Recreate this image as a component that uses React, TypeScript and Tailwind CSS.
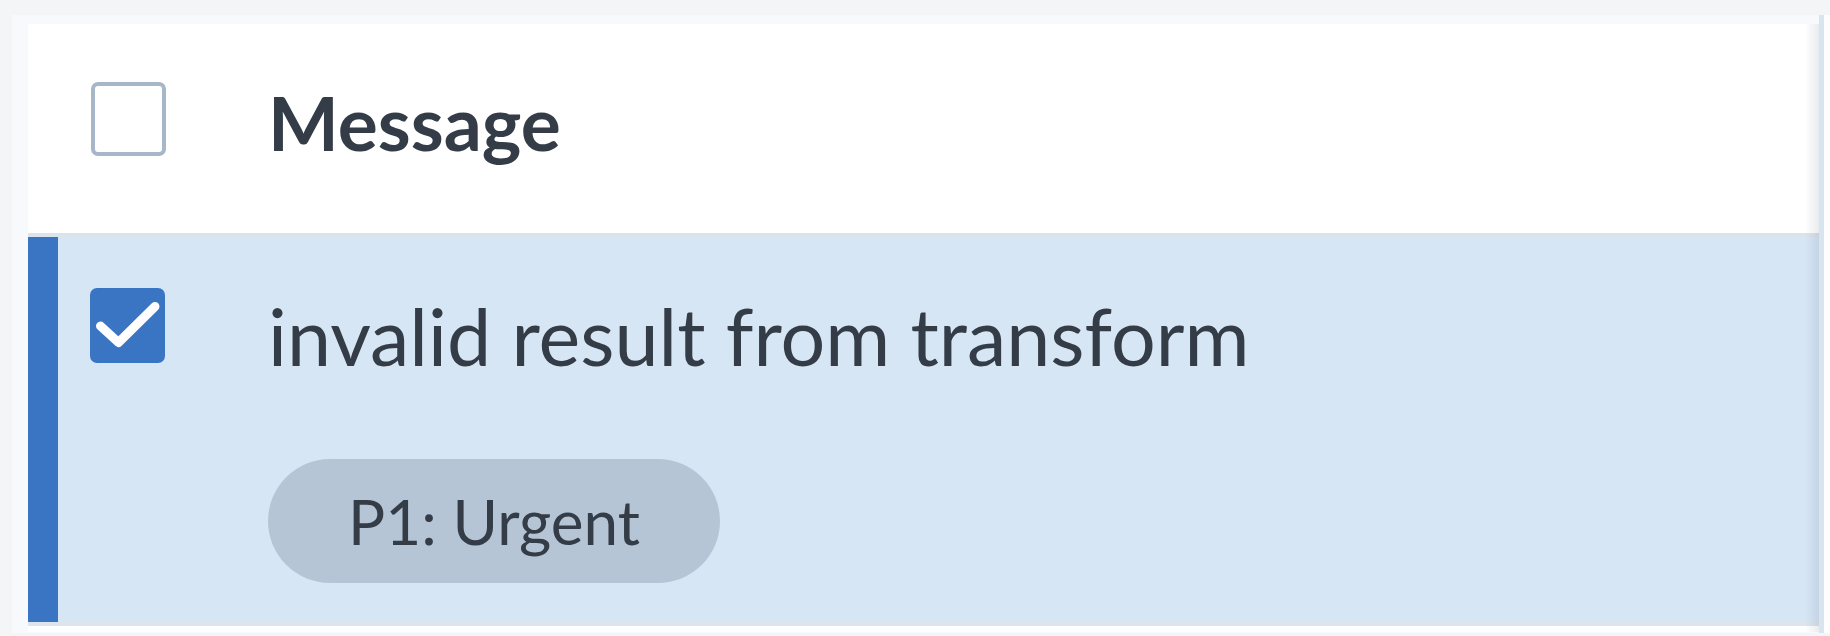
export default function App() {
  return (
    <div className="min-h-screen w-full bg-[#f4f5f7] pt-[15px] font-['Lato',sans-serif] text-[#343d47]">
      <div className="flex">
        <div className="w-[12px] shrink-0" />
        <div className="w-[1812px] shrink-0 bg-[#f8f9fd] pl-[16px] pt-[9px] pb-[1px] border-r-[5px] border-[#d9e5ee]">
          <div className="relative bg-white pb-[6px]">
            {/* header */}
            <div className="flex h-[213px] items-start border-b-[4px] border-[#dbe3eb]">
              <div className="w-[240px] shrink-0 pl-[63px] pt-[58px]">
                <div className="h-[74px] w-[75px] rounded-[7px] border-[4px] border-[#a8b7c7] bg-white" />
              </div>
              <div className="pt-[61px] text-[75px] font-bold leading-none">Message</div>
            </div>

            {/* selected row */}
            <div className="flex h-[389px] border-b-[4px] border-[#dde5ec] bg-[#d6e6f5]">
              <div className="w-[30px] shrink-0 bg-[#3a75c4]" />
              <div className="w-[210px] shrink-0 pl-[32px] pt-[51px]">
                <div className="flex h-[75px] w-[75px] items-center justify-center rounded-[7px] bg-[#3a75c4]">
                  <svg width="75" height="75" viewBox="0 0 75 75" fill="none">
                    <polyline
                      points="10.5,38 28.5,54.5 65,18.5"
                      stroke="#ffffff"
                      strokeWidth="9"
                      strokeLinecap="round"
                      strokeLinejoin="round"
                    />
                  </svg>
                </div>
              </div>
              <div className="flex flex-col items-start pt-[59px]">
                <div className="text-[79px] leading-none">invalid result from transform</div>
                <div className="mt-[84px] flex h-[124px] items-center rounded-full bg-[#b5c5d6] pl-[80px] pr-[80px] text-[62px] leading-none">
                  P1: Urgent
                </div>
              </div>
            </div>

            <div className="pointer-events-none absolute right-0 top-0 bottom-0 w-[14px] bg-linear-to-l from-[rgba(40,60,90,0.10)] to-transparent" />
          </div>
        </div>
        <div className="w-[6px] shrink-0 bg-[#fdfdfe]" />
      </div>
    </div>
  );
}
